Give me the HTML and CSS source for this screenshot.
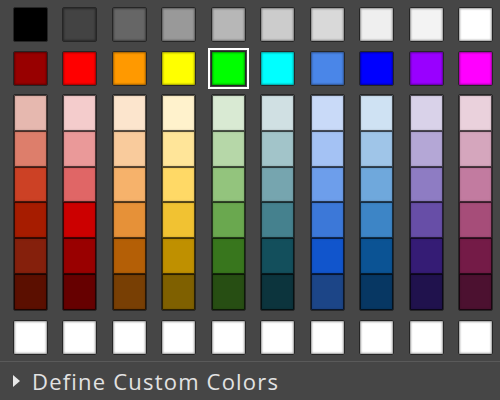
FILE: index.html
```html
<!DOCTYPE html>
<html>
<head>
<meta charset="utf-8">
<link rel="stylesheet" href="styles.css">
</head>
<body>
<div class="picker">
  <div class="grid">
    <div class="row">
      <div class="sw" style="background:#000000"></div>
      <div class="sw" style="background:#434343"></div>
      <div class="sw" style="background:#666666"></div>
      <div class="sw" style="background:#999999"></div>
      <div class="sw" style="background:#b7b7b7"></div>
      <div class="sw" style="background:#cccccc"></div>
      <div class="sw" style="background:#d9d9d9"></div>
      <div class="sw" style="background:#efefef"></div>
      <div class="sw" style="background:#f3f3f3"></div>
      <div class="sw" style="background:#ffffff"></div>
    </div>
    <div class="row">
      <div class="sw" style="background:#980000"></div>
      <div class="sw" style="background:#ff0000"></div>
      <div class="sw" style="background:#ff9900"></div>
      <div class="sw" style="background:#ffff00"></div>
      <div class="sw sel" style="background:#00ff00"></div>
      <div class="sw" style="background:#00ffff"></div>
      <div class="sw" style="background:#4a86e8"></div>
      <div class="sw" style="background:#0000ff"></div>
      <div class="sw" style="background:#9900ff"></div>
      <div class="sw" style="background:#ff00ff"></div>
    </div>
    <div class="row ramps">
      <div class="ramp">
        <div class="cell" style="background:#e6b8af"></div>
        <div class="cell" style="background:#dd7e6b"></div>
        <div class="cell" style="background:#cc4125"></div>
        <div class="cell" style="background:#a61c00"></div>
        <div class="cell" style="background:#85200c"></div>
        <div class="cell" style="background:#5b0f00"></div>
      </div>
      <div class="ramp">
        <div class="cell" style="background:#f4cccc"></div>
        <div class="cell" style="background:#ea9999"></div>
        <div class="cell" style="background:#e06666"></div>
        <div class="cell" style="background:#cc0000"></div>
        <div class="cell" style="background:#990000"></div>
        <div class="cell" style="background:#660000"></div>
      </div>
      <div class="ramp">
        <div class="cell" style="background:#fce5cd"></div>
        <div class="cell" style="background:#f9cb9c"></div>
        <div class="cell" style="background:#f6b26b"></div>
        <div class="cell" style="background:#e69138"></div>
        <div class="cell" style="background:#b45f06"></div>
        <div class="cell" style="background:#783f04"></div>
      </div>
      <div class="ramp">
        <div class="cell" style="background:#fff2cc"></div>
        <div class="cell" style="background:#ffe599"></div>
        <div class="cell" style="background:#ffd966"></div>
        <div class="cell" style="background:#f1c232"></div>
        <div class="cell" style="background:#bf9000"></div>
        <div class="cell" style="background:#7f6000"></div>
      </div>
      <div class="ramp">
        <div class="cell" style="background:#d9ead3"></div>
        <div class="cell" style="background:#b6d7a8"></div>
        <div class="cell" style="background:#93c47d"></div>
        <div class="cell" style="background:#6aa84f"></div>
        <div class="cell" style="background:#38761d"></div>
        <div class="cell" style="background:#274e13"></div>
      </div>
      <div class="ramp">
        <div class="cell" style="background:#d0e0e3"></div>
        <div class="cell" style="background:#a2c4c9"></div>
        <div class="cell" style="background:#76a5af"></div>
        <div class="cell" style="background:#45818e"></div>
        <div class="cell" style="background:#134f5c"></div>
        <div class="cell" style="background:#0c343d"></div>
      </div>
      <div class="ramp">
        <div class="cell" style="background:#c9daf8"></div>
        <div class="cell" style="background:#a4c2f4"></div>
        <div class="cell" style="background:#6d9eeb"></div>
        <div class="cell" style="background:#3c78d8"></div>
        <div class="cell" style="background:#1155cc"></div>
        <div class="cell" style="background:#1c4587"></div>
      </div>
      <div class="ramp">
        <div class="cell" style="background:#cfe2f3"></div>
        <div class="cell" style="background:#9fc5e8"></div>
        <div class="cell" style="background:#6fa8dc"></div>
        <div class="cell" style="background:#3d85c6"></div>
        <div class="cell" style="background:#0b5394"></div>
        <div class="cell" style="background:#073763"></div>
      </div>
      <div class="ramp">
        <div class="cell" style="background:#d9d2e9"></div>
        <div class="cell" style="background:#b4a7d6"></div>
        <div class="cell" style="background:#8e7cc3"></div>
        <div class="cell" style="background:#674ea7"></div>
        <div class="cell" style="background:#351c75"></div>
        <div class="cell" style="background:#20124d"></div>
      </div>
      <div class="ramp">
        <div class="cell" style="background:#ead1dc"></div>
        <div class="cell" style="background:#d5a6bd"></div>
        <div class="cell" style="background:#c27ba0"></div>
        <div class="cell" style="background:#a64d79"></div>
        <div class="cell" style="background:#741b47"></div>
        <div class="cell" style="background:#4c1130"></div>
      </div>
    </div>
    <div class="row">
      <div class="sw custom"></div>
      <div class="sw custom"></div>
      <div class="sw custom"></div>
      <div class="sw custom"></div>
      <div class="sw custom"></div>
      <div class="sw custom"></div>
      <div class="sw custom"></div>
      <div class="sw custom"></div>
      <div class="sw custom"></div>
      <div class="sw custom"></div>
    </div>
  </div>
  <div class="footer">
    <span class="tri"></span>
    <span class="label">Define Custom Colors</span>
  </div>
</div>
</body>
</html>
```

FILE: styles.css
```css
html, body {
  margin: 0;
  padding: 0;
  background: #464646;
}

.picker {
  width: 500px;
  height: 400px;
  box-sizing: border-box;
  background: #464646;
  display: flex;
  flex-direction: column;
  font-family: "Open Sans", "Noto Sans", sans-serif;
}

.grid {
  padding: 7px 7px 0 13px;
  display: flex;
  flex-direction: column;
  gap: 8.5px;
}

.row {
  display: flex;
  justify-content: space-between;
  height: 35px;
}

.sw {
  width: 35px;
  height: 35px;
  box-sizing: border-box;
  border: 1px solid #262626;
  border-radius: 2px;
  box-shadow: inset 0 0 2px 1px rgba(0, 0, 0, 0.4);
}

.sw.custom {
  background: #ffffff;
}

.sw.sel {
  border-radius: 0;
  outline: 2.5px solid #ffffff;
  outline-offset: 1.5px;
}

.ramps {
  height: 217px;
}

.ramp {
  width: 35px;
  height: 217px;
  box-sizing: border-box;
  border: 1px solid #262626;
  border-radius: 2px;
  display: flex;
  flex-direction: column;
  overflow: hidden;
}

.cell {
  flex: 1;
  box-shadow: inset 0 0 0 1px rgba(0, 0, 0, 0.6), inset 0 0 2px 1px rgba(0, 0, 0, 0.2);
}

.footer {
  margin-top: 6px;
  border-top: 1px solid #5a5a5a;
  flex: 1;
  display: flex;
  align-items: center;
  padding-left: 13px;
  gap: 12px;
}

.tri {
  width: 0;
  height: 0;
  border-top: 6px solid transparent;
  border-bottom: 6px solid transparent;
  border-left: 7px solid #e8e8e8;
}

.label {
  color: #e2e2e2;
  font-size: 22px;
  letter-spacing: 1.2px;
  line-height: 1;
}
```
